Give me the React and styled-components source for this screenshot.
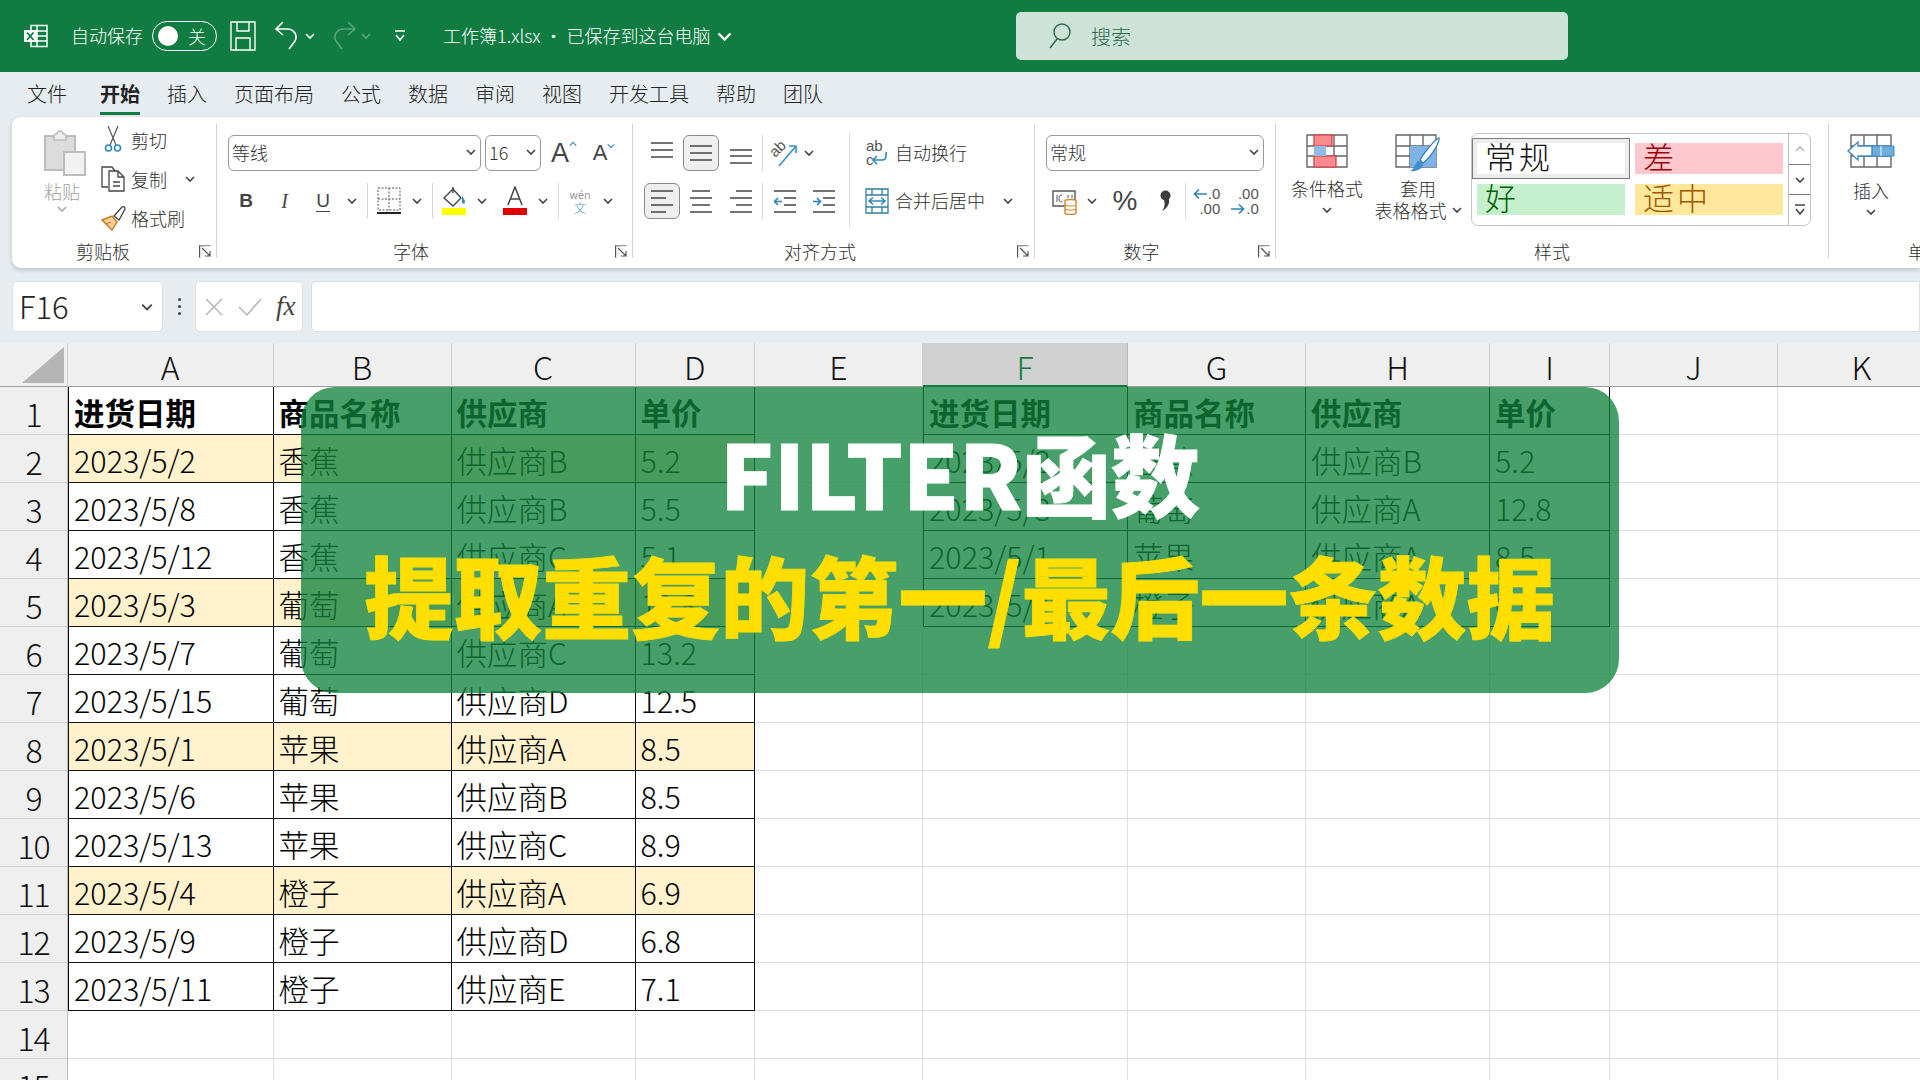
import React from "react";
import styled, { createGlobalStyle } from "styled-components";

const GlobalStyle = createGlobalStyle`
  html, body { margin: 0; padding: 0; background: #e6ecef; }
  * { box-sizing: border-box; }
  body { font-family: "Noto Sans CJK SC", "Noto Sans", sans-serif; }
`;

const Page = styled.div`
  position: relative;
  width: 1920px;
  height: 1080px;
  overflow: hidden;
  background: #e6ecef;
  color: #333;
`;

/* title bar */
const TitleBar = styled.div`
  display: flex;
  align-items: center;
  height: 72px;
  padding-left: 24px;
  background: #107c41;
  color: #fff;
  font-size: 18px;
  font-weight: 300;
`;
const TitleSlot = styled.div`
  display: flex;
  flex: none;
  align-items: center;
  justify-content: ${(p) => p.$justify || "center"};
  width: ${(p) => p.$w}px;
  margin-left: ${(p) => p.$ml || 0}px;
  padding-bottom: ${(p) => p.$lift || 0}px;
  white-space: nowrap;
`;
const Toggle = styled.div`
  display: flex;
  flex: none;
  align-items: center;
  justify-content: space-between;
  width: 65px;
  height: 30px;
  margin-left: 9px;
  padding: 0 10px 0 5px;
  border: 1px solid #fff;
  border-radius: 15px;
  font-size: 18px;
  line-height: 1;
`;
const Knob = styled.span`
  width: 20px;
  height: 20px;
  border-radius: 50%;
  background: #fff;
`;
const SearchBox = styled.div`
  display: flex;
  flex: none;
  align-items: center;
  gap: 20px;
  width: 552px;
  height: 48px;
  margin-left: 284px;
  padding-left: 33px;
  border-radius: 5px;
  background: #cde3d8;
  color: #2f6a4c;
  font-size: 20px;
`;

/* tabs */
const TabRow = styled.div`
  display: flex;
  align-items: center;
  gap: 27px;
  height: 45px;
  padding: 2px 0 0 27px;
  font-size: 20px;
  font-weight: 300;
  color: #222;
`;
const Tab = styled.div`
  line-height: 36px;
  margin-left: ${(p) => (p.$active ? 6 : 0)}px;
  font-weight: ${(p) => (p.$active ? 700 : 300)};
  border-bottom: 3px solid ${(p) => (p.$active ? "#107c41" : "transparent")};
`;

/* ribbon */
const Ribbon = styled.div`
  display: flex;
  height: 151px;
  margin-left: 12px;
  overflow: hidden;
  border-radius: 9px 0 0 9px;
  background: #fff;
  box-shadow: 0 2px 5px rgba(0, 0, 0, 0.18);
  font-size: 18px;
  font-weight: 300;
  color: #2e2e2e;
`;
const Group = styled.div`
  display: flex;
  flex: none;
  flex-direction: column;
  width: ${(p) => p.$w}px;
`;
const GroupBody = styled.div`
  display: flex;
  flex: 1;
  padding-top: ${(p) => p.$top ?? 18}px;
`;
const GroupFoot = styled.div`
  display: flex;
  align-items: center;
  height: 26px;
  margin-bottom: 4px;
`;
const GroupLabel = styled.div`
  flex: 1;
  padding-left: ${(p) => p.$pl || 0}px;
  text-align: center;
  line-height: 26px;
`;
const Launcher = styled.div`
  display: flex;
  flex: none;
  justify-content: flex-end;
  width: 27px;
  padding-right: 4px;
`;
const GroupRule = styled.div`
  flex: none;
  width: 1px;
  margin: 7px 0 10px;
  background: #d4d4d4;
`;
const Stack = styled.div`
  display: flex;
  flex: none;
  flex-direction: column;
  gap: ${(p) => p.$gap ?? 12}px;
  width: ${(p) => (p.$w ? `${p.$w}px` : "auto")};
`;
const Row = styled.div`
  display: flex;
  align-items: center;
  height: ${(p) => p.$h || 36}px;
  padding-left: ${(p) => p.$pl || 0}px;
`;
const Slot = styled.div`
  display: flex;
  flex: none;
  align-items: center;
  justify-content: center;
  width: ${(p) => p.$w}px;
  height: 36px;
  margin-left: ${(p) => p.$ml || 0}px;
  padding-bottom: ${(p) => p.$lift || 0}px;
  border-radius: 6px;
  ${(p) => p.$on && "background: #efefef; border: 1px solid #8a8a8a;"}
`;
const Sep = styled.div`
  flex: none;
  width: 1px;
  height: 36px;
  margin: 0 ${(p) => p.$m ?? 3}px;
  background: #d8d8d8;
`;
const LongSep = styled.div`
  flex: none;
  width: 1px;
  height: 94px;
  margin-top: -2px;
  background: #d8d8d8;
`;
const PasteColumn = styled.div`
  display: flex;
  flex: none;
  flex-direction: column;
  align-items: center;
  width: 72px;
  margin-left: 14px;
  padding-top: 10px;
  color: #a0a0a0;
`;
const PasteArt = styled.div`
  display: flex;
  margin-left: 5px;
`;
const PasteLabel = styled.div`
  margin-top: 2px;
  line-height: 26px;
`;
const ClipItem = styled.div`
  display: flex;
  align-items: center;
  height: 39px;
`;
const ClipIcon = styled.div`
  display: flex;
  flex: none;
  justify-content: center;
  width: 30px;
  margin-right: 3px;
`;
const SelectBox = styled.div`
  display: flex;
  flex: none;
  align-items: center;
  justify-content: space-between;
  width: ${(p) => p.$w}px;
  height: 36px;
  margin-left: ${(p) => p.$ml || 0}px;
  padding: 0 4px 2px 3px;
  border: 1px solid #9a9a9a;
  border-radius: 6px;
  color: #333;
`;
const Bold = styled.span`
  font-family: "Liberation Sans", sans-serif;
  font-size: 19px;
  font-weight: 700;
  color: #444;
`;
const Ital = styled.span`
  font-family: "Liberation Serif", serif;
  font-size: 20px;
  font-style: italic;
  color: #444;
`;
const Under = styled.span`
  font-family: "Liberation Sans", sans-serif;
  font-size: 19px;
  line-height: 20px;
  border-bottom: 1.5px solid #444;
  color: #444;
`;
const GrowA = styled.span`
  display: inline-flex;
  align-items: flex-start;
  font-family: "Liberation Sans", sans-serif;
  font-size: ${(p) => p.$size}px;
  line-height: 1;
  color: #444;
`;
const Phonetic = styled.div`
  display: flex;
  flex-direction: column;
  align-items: center;
  font-size: 11px;
  line-height: 13px;
  color: #666;
`;
const PhoneticCjk = styled.span`
  color: #3b8fc4;
  font-size: 12px;
`;
const Percent = styled.span`
  font-family: "Liberation Sans", sans-serif;
  font-size: 28px;
  line-height: 1;
  color: #444;
`;
const Decimal = styled.div`
  display: flex;
  flex-direction: column;
  font-family: "Liberation Sans", sans-serif;
  font-size: 15px;
  line-height: 15px;
  color: #555;
`;
const DecimalLine = styled.div`
  display: flex;
  align-items: center;
  justify-content: flex-end;
  gap: 1px;
`;
const BigColumn = styled.div`
  display: flex;
  flex: none;
  flex-direction: column;
  align-items: center;
  width: ${(p) => p.$w}px;
  margin-left: ${(p) => p.$ml || 0}px;
  line-height: 22px;
  white-space: nowrap;
`;
const BigIcon = styled.div`
  display: flex;
  align-items: flex-start;
  height: 42px;
  margin-bottom: ${(p) => p.$mb ?? 4}px;
`;
const BigChevron = styled.div`
  display: flex;
  margin-top: ${(p) => p.$mt || 0}px;
`;
const TextWithChevron = styled.span`
  display: flex;
  align-items: center;
  gap: 5px;
`;
const Gallery = styled.div`
  display: flex;
  flex: none;
  width: 340px;
  height: 93px;
  margin-left: 7px;
  margin-top: -1px;
  overflow: hidden;
  border: 1px solid #c4c4c4;
  border-radius: 7px;
`;
const StyleGrid = styled.div`
  display: grid;
  grid-template-columns: 158px 158px;
  grid-template-rows: 41px 41px;
  flex: 1;
  padding-top: 4px;
`;
const StyleCell = styled.div`
  padding: 4px;
  border: ${(p) => (p.$picked ? "1px solid #7b7b7b" : "1px solid transparent")};
  background: ${(p) => (p.$picked ? "#ececec" : "transparent")};
`;
const StyleFill = styled.div`
  display: flex;
  align-items: center;
  height: 100%;
  overflow: hidden;
  padding: 0 0 7px 8px;
  background: ${(p) => p.$bg};
  color: ${(p) => p.$fg};
  font-size: 31px;
  letter-spacing: 3px;
  line-height: 33px;
`;
const GalleryScroll = styled.div`
  display: flex;
  flex: none;
  flex-direction: column;
  width: 22px;
  border-left: 1px solid #bdbdbd;
`;
const ScrollBtn = styled.div`
  display: flex;
  align-items: center;
  justify-content: center;
  flex: 1;
  border-bottom: ${(p) => (p.$line ? "1px solid #777" : "none")};
`;

/* formula bar */
const FormulaBar = styled.div`
  display: flex;
  align-items: center;
  height: 51px;
  margin-top: 13px;
  padding-left: 12px;
`;
const Field = styled.div`
  display: flex;
  flex: ${(p) => (p.$w ? "none" : 1)};
  align-items: center;
  width: ${(p) => (p.$w ? `${p.$w}px` : "auto")};
  height: 51px;
  margin-left: ${(p) => p.$ml || 0}px;
  background: #fff;
  border: 1px solid #dcdfe1;
  border-radius: ${(p) => (p.$w ? "5px" : "5px 0 0 5px")};
`;
const NameText = styled.span`
  flex: 1;
  padding: 0 0 2px 6px;
  font-size: 31px;
  font-weight: 300;
  color: #222;
`;
const Dots = styled.div`
  display: flex;
  flex: none;
  flex-direction: column;
  align-items: center;
  gap: 4px;
  width: 32px;
`;
const Dot = styled.i`
  width: 3px;
  height: 3px;
  border-radius: 50%;
  background: #444;
`;
const FxText = styled.span`
  font-family: "Liberation Serif", serif;
  font-style: italic;
  font-size: 27px;
  color: #444;
  margin-left: 14px;
`;

/* sheet */
const columns = [205.5, 178, 184, 119.5, 168, 205, 178, 184, 120, 168, 168, 168];
const letters = ["A", "B", "C", "D", "E", "F", "G", "H", "I", "J", "K", "L"];

const Sheet = styled.div`
  display: grid;
  grid-template-columns: 68px ${columns.map((c) => `${c}px`).join(" ")};
  grid-template-rows: 44px repeat(15, 48px);
  margin-top: 11px;
  background: #fff;
  font-size: 30.5px;
  font-weight: 300;
  color: #000;
`;
const Corner = styled.div`
  display: flex;
  align-items: flex-end;
  justify-content: flex-end;
  padding: 0 3px 3px 0;
  background: #efefef;
  border-right: 1px solid #cfcfcf;
  border-bottom: 1px solid #9f9f9f;
`;
const ColHead = styled.div`
  display: flex;
  align-items: center;
  justify-content: center;
  padding-top: 3px;
  font-size: 32px;
  background: ${(p) => (p.$on ? "#d0d0d0" : "#efefef")};
  color: ${(p) => (p.$on ? "#107c41" : "#111")};
  border-right: 1px solid ${(p) => (p.$on ? "#b8b8b8" : "#cfcfcf")};
  border-bottom: ${(p) => (p.$on ? "2px solid #107c41" : "1px solid #9f9f9f")};
`;
const RowHead = styled.div`
  display: flex;
  align-items: center;
  justify-content: center;
  padding-top: 5px;
  font-size: 32px;
  letter-spacing: -1px;
  background: #efefef;
  color: #111;
  border-right: 1px solid #bdbdbd;
  border-bottom: 1px solid #cfcfcf;
`;
const Cell = styled.div`
  display: flex;
  align-items: center;
  overflow: hidden;
  padding: 3px 0 0 ${(p) => (p.$boxed ? 5 : 7)}px;
  white-space: nowrap;
  font-weight: ${(p) => (p.$head ? 700 : 300)};
  background: ${(p) => (p.$fill ? "#fff2cc" : "#fff")};
  border-right: 1px solid ${(p) => (p.$boxed ? "#111" : "#dedede")};
  border-bottom: 1px solid ${(p) => (p.$boxed ? "#111" : "#dedede")};
  border-left: ${(p) => (p.$first ? "1px solid #111" : "none")};
`;

/* title card over the sheet */
const Banner = styled.div`
  position: absolute;
  top: 387px;
  left: 301px;
  display: flex;
  flex-direction: column;
  align-items: center;
  width: 1318px;
  height: 306px;
  padding-top: 32px;
  border-radius: 34px;
  background: rgba(16, 130, 60, 0.77);
  font-family: "Noto Sans CJK SC", sans-serif;
  font-weight: 900;
  white-space: nowrap;
`;
const BannerTop = styled.div`
  font-size: 89px;
  line-height: 106px;
  color: #fff;
  -webkit-text-stroke: 0.8px #fff;
`;
const BannerBottom = styled.div`
  margin-top: 16px;
  font-size: 89px;
  line-height: 106px;
  color: #ffde00;
  -webkit-text-stroke: 0.8px #ffde00;
`;

/* drawings */
const Chevron = ({ size = 10, color = "#444", up = false }) => (
  <svg width={size} height={size} viewBox="0 0 10 10" fill="none">
    <path d={up ? "M1 7l4-4 4 4" : "M1 3l4 4 4-4"} stroke={color} strokeWidth="1.6" />
  </svg>
);

const Launch = () => (
  <svg width="13" height="13" viewBox="0 0 13 13" fill="none" stroke="#555" strokeWidth="1.2">
    <path d="M.6 12.4V.6h5M.6 12.4M3 3l7.5 7.5M11 6v5H6" />
    <path d="M.6.6h11" stroke="#999" />
  </svg>
);

const ExcelLogo = () => (
  <svg width="24" height="24" viewBox="0 0 24 24" fill="none">
    <path d="M7 1.5h16v21H7z" stroke="#fff" strokeWidth="1.5" />
    <path d="M13 1.5v21M13 7h10M13 12h10M13 17h10" stroke="#fff" strokeWidth="1.5" />
    <rect x="0" y="6" width="13" height="12" fill="#fff" />
    <path d="M3 8.5l6.5 7.5M9.5 8.5L3 16" stroke="#107c41" strokeWidth="1.8" />
  </svg>
);
const SaveIcon = () => (
  <svg width="26" height="30" viewBox="0 0 26 30" fill="none" stroke="#fff" strokeWidth="1.4">
    <path d="M1 1h24v28H1zM7 1v9h12V1M6 29V17h14v12" />
  </svg>
);
const UndoIcon = ({ color = "#fff" }) => (
  <svg width="26" height="30" viewBox="0 0 26 30" fill="none" stroke={color} strokeWidth="1.6">
    <path d="M9 1L2 8l7 6M2 8h11c7 0 11 6 8 12l-6 8" />
  </svg>
);
const RedoIcon = () => (
  <svg width="26" height="30" viewBox="0 0 26 30" fill="none" stroke="#5aa37d" strokeWidth="1.6">
    <path d="M17 1l7 7-7 6M24 8H13C6 8 2 14 5 20l6 8" />
  </svg>
);
const QuickIcon = ({ color = "#fff" }) => (
  <svg width="12" height="14" viewBox="0 0 12 14" fill="none" stroke={color} strokeWidth="1.6">
    <path d="M1 2h10M2 6l4 5 4-5" />
  </svg>
);
const SearchIcon = () => (
  <svg width="22" height="26" viewBox="0 0 22 26" fill="none" stroke="#2f6a4c" strokeWidth="1.5">
    <circle cx="13" cy="9" r="8" />
    <path d="M8 16L1 25" />
  </svg>
);
const PasteIcon = () => (
  <svg width="42" height="46" viewBox="0 0 42 46" fill="none">
    <path d="M1 6h30v34H1z" fill="#dcdcdc" stroke="#bdbdbd" strokeWidth="2" />
    <path d="M10 6c0-2 2-2 3-2 0-4 6-4 6 0 1 0 3 0 3 2v4H10z" fill="#eee" stroke="#bdbdbd" strokeWidth="1.5" />
    <rect x="20" y="22" width="21" height="23" fill="#f2f2f2" stroke="#bdbdbd" strokeWidth="2" />
  </svg>
);
const ScissorIcon = () => (
  <svg width="18" height="27" viewBox="0 0 18 27" fill="none">
    <path d="M14 0L6 19M4 0l8 19" stroke="#555" strokeWidth="1.2" />
    <circle cx="4.5" cy="22" r="3" stroke="#2e86b9" strokeWidth="1.6" />
    <circle cx="13.5" cy="22" r="3" stroke="#2e86b9" strokeWidth="1.6" />
  </svg>
);
const CopyIcon = () => (
  <svg width="24" height="26" viewBox="0 0 24 26" fill="none" stroke="#444" strokeWidth="1.3">
    <path d="M7 21H1V1h10l3 4" />
    <path d="M8 5h9l6 6v14H8zM17 5v6h6M12 16h7M12 20h7" />
  </svg>
);
const BrushIcon = () => (
  <svg width="25" height="26" viewBox="0 0 25 26" fill="none">
    <path d="M1 15l10-4 5 6-5 8z" fill="#f6cf9d" stroke="#c9761c" strokeWidth="1.4" />
    <path d="M5 19l5-2" stroke="#c9761c" />
    <path d="M13 11l8-9c2-1 3 0 3 2l-6 11z" fill="#fff" stroke="#444" strokeWidth="1.3" />
  </svg>
);
const BorderIcon = () => (
  <svg width="24" height="28" viewBox="0 0 24 28" fill="none" stroke="#555">
    <path d="M1 1h22v22H1zM12 1v22M1 12h22" strokeDasharray="2 1.5" />
    <path d="M0 26h24" strokeWidth="2" stroke="#222" />
  </svg>
);
const FillIcon = () => (
  <svg width="24" height="30" viewBox="0 0 24 30" fill="none">
    <path d="M2 12L11 3l8 9-8 8z" stroke="#444" strokeWidth="1.4" />
    <path d="M11 1v6" stroke="#444" strokeWidth="1.4" />
    <path d="M20 10c2 3 3 4 3 6s-3 2-3 0z" fill="#2e86b9" />
    <rect y="22" width="24" height="7" fill="#ffff00" />
  </svg>
);
const FontColorIcon = () => (
  <svg width="24" height="30" viewBox="0 0 24 30" fill="none">
    <path d="M5 19L12 1l7 18M7.5 13h9" stroke="#444" strokeWidth="1.5" />
    <rect y="22" width="24" height="7" fill="#e00000" />
  </svg>
);
const Lines = ({ y = [1, 8, 15] }) => (
  <svg width="22" height="22" viewBox="0 0 22 22" fill="none" stroke="#444" strokeWidth="1.4">
    {y.map((v) => (
      <path key={v} d={`M0 ${v}h22`} />
    ))}
  </svg>
);
const AlignBars = ({ mode }) => {
  const x = { left: [0, 0, 0, 0], center: [2, 0, 2, 0], right: [6, 0, 6, 0] }[mode];
  const w = mode === "left" ? [22, 15, 22, 15] : mode === "center" ? [18, 22, 18, 22] : [16, 22, 16, 22];
  return (
    <svg width="22" height="24" viewBox="0 0 22 24" fill="none" stroke="#444" strokeWidth="1.4">
      {[2, 9, 16, 23].map((v, i) => (
        <path key={v} d={`M${x[i]} ${v}h${w[i]}`} />
      ))}
    </svg>
  );
};
const OrientIcon = () => (
  <svg width="28" height="28" viewBox="0 0 28 28" fill="none">
    <text x="1" y="15" fontSize="15" fontFamily="Liberation Sans" fill="#555" transform="rotate(-45 8 12)">ab</text>
    <path d="M9 27L26 7M19 7h7v7" stroke="#3b8fc4" strokeWidth="1.6" />
  </svg>
);
const IndentIcon = ({ grow }) => (
  <svg width="22" height="24" viewBox="0 0 22 24" fill="none">
    <path d="M0 2h22M10 9h12M10 16h12M0 23h22" stroke="#444" strokeWidth="1.3" />
    <path d={grow ? "M0 12.5h7M4 9l3.500 3.500L4 16" : "M8 12.500H1M4 9l-3.500 3.500L4 16"} stroke="#2e86b9" strokeWidth="1.6" />
  </svg>
);
const WrapIcon = () => (
  <svg width="24" height="28" viewBox="0 0 24 28" fill="none">
    <text x="1" y="12" fontSize="15" fontFamily="Liberation Sans" fill="#555">ab</text>
    <text x="1" y="26" fontSize="15" fontFamily="Liberation Sans" fill="#555">c</text>
    <path d="M21 13v4c0 3-2 4-4 4H9M12 17l-4 4 4 4" stroke="#2e86b9" strokeWidth="1.6" />
  </svg>
);
const MergeIcon = () => (
  <svg width="24" height="26" viewBox="0 0 24 26" fill="none">
    <path d="M1 1h22v24H1zM1 7h22M1 19h22M7 1v6M17 1v6M7 19v6M17 19v6" stroke="#2f7f9f" strokeWidth="1.3" />
    <path d="M4 13h16M8 9.500L4 13l4 3.500M16 9.500l4 3.500-4 3.500" stroke="#2e86b9" strokeWidth="1.5" />
  </svg>
);
const CurrencyIcon = () => (
  <svg width="25" height="27" viewBox="0 0 25 27" fill="none">
    <path d="M1 3h22v15H1z" stroke="#555" strokeWidth="1.4" />
    <path d="M5 7v7M10 7c-2 0-3 1-3 3.500S8 14 10 14M16 7v3M20 7v3" stroke="#555" />
    <path d="M13 13c0-2 11-2 11 0v12c0 2-11 2-11 0z" fill="#fff" stroke="#d9822b" strokeWidth="1.4" />
    <path d="M13 17c2 1.500 9 1.500 11 0M13 21c2 1.500 9 1.500 11 0" stroke="#d9822b" />
  </svg>
);
const CommaIcon = () => (
  <svg width="12" height="22" viewBox="0 0 12 22">
    <circle cx="6.500" cy="5.500" r="5" fill="#3c3c3c" />
    <path d="M9 7c3 5 0 11-6 14 3-4 3-7 2-11z" fill="#3c3c3c" />
  </svg>
);
const ArrowLeft = () => (
  <svg width="14" height="12" viewBox="0 0 14 12" fill="none" stroke="#2e86b9" strokeWidth="1.7">
    <path d="M14 6H2M6 1.500L1.500 6 6 10.500" />
  </svg>
);
const ArrowRight = () => (
  <svg width="14" height="12" viewBox="0 0 14 12" fill="none" stroke="#2e86b9" strokeWidth="1.7">
    <path d="M0 6h12M8 1.500L12.500 6 8 10.500" />
  </svg>
);
const GridLines = () => (
  <path d="M1 1h40v32H1zM15 1v32M28 1v32M1 12h40M1 22h40" stroke="#666" strokeWidth="1.4" fill="none" />
);
const CondIcon = () => (
  <svg width="42" height="34" viewBox="0 0 42 34">
    <GridLines />
    <path d="M8 1h18v11H8zM8 22h22v11H8z" fill="#fb8b8f" stroke="#d9363e" strokeWidth="1.2" />
    <path d="M8 12h12v10H8z" fill="#8fbbe6" />
  </svg>
);
const TableStyleIcon = () => (
  <svg width="46" height="42" viewBox="0 0 46 42">
    <GridLines />
    <path d="M15 12h26v21H15z" fill="#7fb2e5" />
    <path d="M44 4c1 5-9 20-16 25l-3-3C29 19 39 6 44 4z" fill="#fff" stroke="#2f7fbf" strokeWidth="1.3" />
    <path d="M24 27c4 0 5 3 3 6s-8 5-12 4c3-1 4-4 5-6s2-4 4-4z" fill="#3f8fd0" />
  </svg>
);
const InsertIcon = () => (
  <svg width="48" height="34" viewBox="0 0 48 34">
    <path d="M4 1h40v32H4zM17 1v32M30 1v32M4 12h40M4 22h40" stroke="#666" strokeWidth="1.4" fill="none" />
    <path d="M21 12h26v10H21z" fill="#6daee0" stroke="#3d8ac4" />
    <path d="M34 12v10" stroke="#fff" />
    <path d="M1 17L11 8v4h14v10H11v4z" fill="#fff" stroke="#3d8ac4" strokeWidth="1.4" />
  </svg>
);
const PartIcon = () => (
  <svg width="30" height="34" viewBox="0 0 30 34" fill="none" stroke="#666" strokeWidth="1.4">
    <path d="M1 1h12v10H1zM1 23h12v10H1z" />
  </svg>
);
const CrossIcon = () => (
  <svg width="18" height="18" viewBox="0 0 18 18" fill="none" stroke="#b5b5b5" strokeWidth="1.5">
    <path d="M1 1l16 16M17 1L1 17" />
  </svg>
);
const CheckIcon = () => (
  <svg width="24" height="18" viewBox="0 0 24 18" fill="none" stroke="#b5b5b5" strokeWidth="1.5">
    <path d="M1 9l8 8L23 1" />
  </svg>
);
const CornerMark = () => (
  <svg width="42" height="36" viewBox="0 0 42 36">
    <path d="M42 0v36H0z" fill="#b5b5b5" />
  </svg>
);

const tabs = ["文件", "开始", "插入", "页面布局", "公式", "数据", "审阅", "视图", "开发工具", "帮助", "团队"];

const leftRows = [
  ["进货日期", "商品名称", "供应商", "单价"],
  ["2023/5/2", "香蕉", "供应商B", "5.2"],
  ["2023/5/8", "香蕉", "供应商B", "5.5"],
  ["2023/5/12", "香蕉", "供应商C", "5.1"],
  ["2023/5/3", "葡萄", "供应商A", "12.8"],
  ["2023/5/7", "葡萄", "供应商C", "13.2"],
  ["2023/5/15", "葡萄", "供应商D", "12.5"],
  ["2023/5/1", "苹果", "供应商A", "8.5"],
  ["2023/5/6", "苹果", "供应商B", "8.5"],
  ["2023/5/13", "苹果", "供应商C", "8.9"],
  ["2023/5/4", "橙子", "供应商A", "6.9"],
  ["2023/5/9", "橙子", "供应商D", "6.8"],
  ["2023/5/11", "橙子", "供应商E", "7.1"],
];
const rightRows = [
  ["进货日期", "商品名称", "供应商", "单价"],
  ["2023/5/2", "香蕉", "供应商B", "5.2"],
  ["2023/5/3", "葡萄", "供应商A", "12.8"],
  ["2023/5/1", "苹果", "供应商A", "8.5"],
  ["2023/5/4", "橙子", "供应商A", "6.9"],
];
const filled = [1, 4, 7, 10];

const cellFor = (r, c) => {
  const head = r === 0;
  if (c <= 3 && leftRows[r]) {
    return { text: leftRows[r][c], boxed: true, head, fill: filled.includes(r), first: c === 0 };
  }
  if (c >= 5 && c <= 8 && rightRows[r]) {
    return { text: rightRows[r][c - 5], boxed: true, head, first: c === 5 };
  }
  return {};
};

const SheetGrid = () => (
  <Sheet>
    <Corner>
      <CornerMark />
    </Corner>
    {letters.map((l) => (
      <ColHead key={l} $on={l === "F"}>
        {l}
      </ColHead>
    ))}
    {Array.from({ length: 15 }, (_, r) => (
      <React.Fragment key={r}>
        <RowHead>{r + 1}</RowHead>
        {letters.map((l, c) => {
          const info = cellFor(r, c);
          return (
            <Cell key={l} $boxed={info.boxed} $head={info.head} $fill={info.fill} $first={info.first}>
              {info.text}
            </Cell>
          );
        })}
      </React.Fragment>
    ))}
  </Sheet>
);

const Ribbons = () => (
  <Ribbon>
    <Group $w={204}>
      <GroupBody $top={3}>
        <PasteColumn>
          <PasteArt>
            <PasteIcon />
          </PasteArt>
          <PasteLabel>粘贴</PasteLabel>
          <Chevron color="#aaa" />
        </PasteColumn>
        <Stack $gap={0}>
          <ClipItem>
            <ClipIcon>
              <ScissorIcon />
            </ClipIcon>
            剪切
          </ClipItem>
          <ClipItem>
            <ClipIcon>
              <CopyIcon />
            </ClipIcon>
            复制
            <Slot $w={12} $ml={17}>
              <Chevron />
            </Slot>
          </ClipItem>
          <ClipItem>
            <ClipIcon>
              <BrushIcon />
            </ClipIcon>
            格式刷
          </ClipItem>
        </Stack>
      </GroupBody>
      <GroupFoot>
        <GroupLabel $pl={5}>剪贴板</GroupLabel>
        <Launcher>
          <Launch />
        </Launcher>
      </GroupFoot>
    </Group>
    <GroupRule />
    <Group $w={415}>
      <GroupBody>
        <Stack>
          <Row>
            <SelectBox $w={253} $ml={11}>
              等线
              <Chevron />
            </SelectBox>
            <SelectBox $w={56} $ml={4}>
              16
              <Chevron />
            </SelectBox>
            <Slot $w={28} $ml={9}>
              <GrowA $size={27}>
                A
                <Chevron size={8} color="#3b8fc4" up />
              </GrowA>
            </Slot>
            <Slot $w={28} $ml={12}>
              <GrowA $size={22}>
                A
                <Chevron size={8} color="#3b8fc4" />
              </GrowA>
            </Slot>
          </Row>
          <Row $pl={10}>
            <Slot $w={38}>
              <Bold>B</Bold>
            </Slot>
            <Slot $w={39}>
              <Ital>I</Ital>
            </Slot>
            <Slot $w={38}>
              <Under>U</Under>
            </Slot>
            <Slot $w={20}>
              <Chevron />
            </Slot>
            <Sep $m={4.5} />
            <Slot $w={33}>
              <BorderIcon />
            </Slot>
            <Slot $w={24}>
              <Chevron />
            </Slot>
            <Sep $m={2.5} />
            <Slot $w={37}>
              <FillIcon />
            </Slot>
            <Slot $w={20}>
              <Chevron />
            </Slot>
            <Slot $w={46}>
              <FontColorIcon />
            </Slot>
            <Slot $w={10}>
              <Chevron />
            </Slot>
            <Sep $m={9.5} />
            <Slot $w={24}>
              <Phonetic>
                wén
                <PhoneticCjk>文</PhoneticCjk>
              </Phonetic>
            </Slot>
            <Slot $w={32}>
              <Chevron />
            </Slot>
          </Row>
        </Stack>
      </GroupBody>
      <GroupFoot>
        <GroupLabel>字体</GroupLabel>
        <Launcher>
          <Launch />
        </Launcher>
      </GroupFoot>
    </Group>
    <GroupRule />
    <Group $w={401}>
      <GroupBody>
        <Stack $w={216}>
          <Row $pl={11}>
            <Slot $w={36}>
              <Lines y={[1, 8, 15]} />
            </Slot>
            <Slot $w={36} $ml={3} $on>
              <Lines y={[4, 11, 18]} />
            </Slot>
            <Slot $w={38} $ml={3}>
              <Lines y={[8, 14, 21]} />
            </Slot>
            <Sep $m={1.5} />
            <Slot $w={36} $ml={2}>
              <OrientIcon />
            </Slot>
            <Slot $w={14}>
              <Chevron />
            </Slot>
          </Row>
          <Row $pl={11}>
            <Slot $w={36} $on>
              <AlignBars mode="left" />
            </Slot>
            <Slot $w={36} $ml={3}>
              <AlignBars mode="center" />
            </Slot>
            <Slot $w={38} $ml={3}>
              <AlignBars mode="right" />
            </Slot>
            <Sep $m={1.5} />
            <Slot $w={38} $ml={2}>
              <IndentIcon />
            </Slot>
            <Slot $w={38} $ml={1}>
              <IndentIcon grow />
            </Slot>
          </Row>
        </Stack>
        <LongSep />
        <Stack>
          <Row $pl={14}>
            <Slot $w={26}>
              <WrapIcon />
            </Slot>
            <Slot $w={72} $ml={5} $lift={2}>
              自动换行
            </Slot>
          </Row>
          <Row $pl={14}>
            <Slot $w={26}>
              <MergeIcon />
            </Slot>
            <Slot $w={90} $ml={5} $lift={2}>
              合并后居中
            </Slot>
            <Slot $w={12} $ml={17}>
              <Chevron />
            </Slot>
          </Row>
        </Stack>
      </GroupBody>
      <GroupFoot>
        <GroupLabel>对齐方式</GroupLabel>
        <Launcher>
          <Launch />
        </Launcher>
      </GroupFoot>
    </Group>
    <GroupRule />
    <Group $w={240}>
      <GroupBody>
        <Stack>
          <Row>
            <SelectBox $w={218} $ml={11}>
              常规
              <Chevron />
            </SelectBox>
          </Row>
          <Row $pl={11}>
            <Slot $w={36}>
              <CurrencyIcon />
            </Slot>
            <Slot $w={20}>
              <Chevron />
            </Slot>
            <Slot $w={46}>
              <Percent>%</Percent>
            </Slot>
            <Slot $w={34}>
              <CommaIcon />
            </Slot>
            <Sep $m={2.5} />
            <Slot $w={37}>
              <Decimal>
                <DecimalLine>
                  <ArrowLeft />
                  .0
                </DecimalLine>
                <DecimalLine>.00</DecimalLine>
              </Decimal>
            </Slot>
            <Slot $w={40}>
              <Decimal>
                <DecimalLine>.00</DecimalLine>
                <DecimalLine>
                  <ArrowRight />
                  .0
                </DecimalLine>
              </Decimal>
            </Slot>
          </Row>
        </Stack>
      </GroupBody>
      <GroupFoot>
        <GroupLabel>数字</GroupLabel>
        <Launcher>
          <Launch />
        </Launcher>
      </GroupFoot>
    </Group>
    <GroupRule />
    <Group $w={552}>
      <GroupBody $top={17}>
        <BigColumn $w={90} $ml={6}>
          <BigIcon $mb={1}>
            <CondIcon />
          </BigIcon>
          条件格式
          <BigChevron $mt={6}>
            <Chevron />
          </BigChevron>
        </BigColumn>
        <BigColumn $w={92}>
          <BigIcon $mb={1}>
            <TableStyleIcon />
          </BigIcon>
          套用
          <TextWithChevron>
            表格格式
            <Chevron />
          </TextWithChevron>
        </BigColumn>
        <Gallery>
          <StyleGrid>
            <StyleCell $picked>
              <StyleFill $bg="#fff" $fg="#111">
                常规
              </StyleFill>
            </StyleCell>
            <StyleCell>
              <StyleFill $bg="#ffc7ce" $fg="#9c0006">
                差
              </StyleFill>
            </StyleCell>
            <StyleCell>
              <StyleFill $bg="#c6efce" $fg="#006100">
                好
              </StyleFill>
            </StyleCell>
            <StyleCell>
              <StyleFill $bg="#ffe89c" $fg="#9c5700">
                适中
              </StyleFill>
            </StyleCell>
          </StyleGrid>
          <GalleryScroll>
            <ScrollBtn $line>
              <Chevron color="#bbb" up />
            </ScrollBtn>
            <ScrollBtn $line>
              <Chevron />
            </ScrollBtn>
            <ScrollBtn>
              <QuickIcon color="#444" />
            </ScrollBtn>
          </GalleryScroll>
        </Gallery>
      </GroupBody>
      <GroupFoot>
        <GroupLabel>样式</GroupLabel>
      </GroupFoot>
    </Group>
    <GroupRule />
    <Group $w={212}>
      <GroupBody $top={17}>
        <BigColumn $w={48} $ml={18}>
          <BigIcon $mb={3}>
            <InsertIcon />
          </BigIcon>
          插入
          <BigChevron $mt={6}>
            <Chevron />
          </BigChevron>
        </BigColumn>
        <BigColumn $w={48} $ml={20}>
          <BigIcon $mb={3}>
            <PartIcon />
          </BigIcon>
          删除
        </BigColumn>
      </GroupBody>
      <GroupFoot>
        <GroupLabel>单元格</GroupLabel>
      </GroupFoot>
    </Group>
  </Ribbon>
);

const App = () => (
  <Page>
    <GlobalStyle />
    <TitleBar>
      <ExcelLogo />
      <TitleSlot $w={72} $ml={23} $lift={2}>
        自动保存
      </TitleSlot>
      <Toggle>
        <Knob />关
      </Toggle>
      <TitleSlot $w={26} $ml={13}>
        <SaveIcon />
      </TitleSlot>
      <TitleSlot $w={26} $ml={18}>
        <UndoIcon />
      </TitleSlot>
      <TitleSlot $w={12} $ml={4}>
        <Chevron color="#fff" />
      </TitleSlot>
      <TitleSlot $w={26} $ml={15}>
        <RedoIcon />
      </TitleSlot>
      <TitleSlot $w={12} $ml={3}>
        <Chevron color="#5aa37d" />
      </TitleSlot>
      <TitleSlot $w={14} $ml={21}>
        <QuickIcon />
      </TitleSlot>
      <TitleSlot $w={266} $ml={36} $justify="flex-start" $lift={2}>
        工作簿1.xlsx • 已保存到这台电脑
      </TitleSlot>
      <TitleSlot $w={16} $ml={7}>
        <Chevron size={15} color="#fff" />
      </TitleSlot>
      <SearchBox>
        <SearchIcon />
        搜索
      </SearchBox>
    </TitleBar>
    <TabRow>
      {tabs.map((t) => (
        <Tab key={t} $active={t === "开始"}>
          {t}
        </Tab>
      ))}
    </TabRow>
    <Ribbons />
    <FormulaBar>
      <Field $w={151}>
        <NameText>F16</NameText>
        <Slot $w={30}>
          <Chevron size={12} />
        </Slot>
      </Field>
      <Dots>
        <Dot />
        <Dot />
        <Dot />
      </Dots>
      <Field $w={108}>
        <Slot $w={18} $ml={9}>
          <CrossIcon />
        </Slot>
        <Slot $w={24} $ml={15}>
          <CheckIcon />
        </Slot>
        <FxText>fx</FxText>
      </Field>
      <Field $ml={8} />
    </FormulaBar>
    <SheetGrid />
    <Banner>
      <BannerTop>FILTER函数</BannerTop>
      <BannerBottom>提取重复的第一/最后一条数据</BannerBottom>
    </Banner>
  </Page>
);

export default App;
